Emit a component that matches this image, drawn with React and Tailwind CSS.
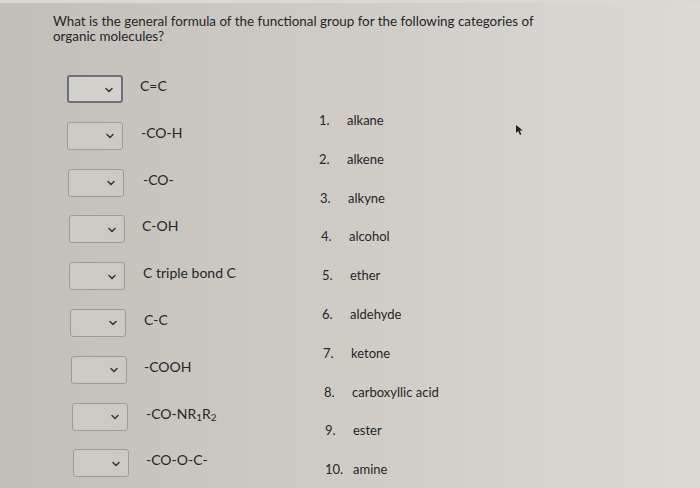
import React from 'react';

const formulas = [
  { label: 'C=C', box: 'ml-[67px]', text: 'ml-[17px]', focused: true },
  { label: '-CO-H', box: 'ml-[67px]', text: 'ml-[18px]' },
  { label: '-CO-', box: 'ml-[68px]', text: 'ml-[19px]' },
  { label: 'C-OH', box: 'ml-[69px]', text: 'ml-[17px]' },
  { label: 'C triple bond C', box: 'ml-[69px]', text: 'ml-[18px]' },
  { label: 'C-C', box: 'ml-[70px]', text: 'ml-[18px]' },
  { label: '-COOH', box: 'ml-[71px]', text: 'ml-[17px]' },
  { label: 'NR', box: 'ml-[72px]', text: 'ml-[18px]' },
  { label: '-CO-O-C-', box: 'ml-[73px]', text: 'ml-[17px]' },
];

const groups = [
  ['1.', 'alkane', 'ml-[0px]'],
  ['2.', 'alkene', 'ml-[0px]'],
  ['3.', 'alkyne', 'ml-[1px]'],
  ['4.', 'alcohol', 'ml-[2px]'],
  ['5.', 'ether', 'ml-[3px]'],
  ['6.', 'aldehyde', 'ml-[3px]'],
  ['7.', 'ketone', 'ml-[4px]'],
  ['8.', 'carboxyllic acid', 'ml-[5px]'],
  ['9.', 'ester', 'ml-[6px]'],
  ['10.', 'amine', 'ml-[6px]'],
];

function Chevron() {
  return (
    <svg width="8" height="6" viewBox="0 0 8 6" className="text-[#3a3a3a]">
      <path d="M1 1.5 L4 4.5 L7 1.5" fill="none" stroke="currentColor" strokeWidth="1.6" strokeLinecap="round" strokeLinejoin="round" />
    </svg>
  );
}

function Label({ label }) {
  if (label === 'NR') {
    return (
      <span>
        -CO-NR<sub className="text-[10px]">1</sub>R<sub className="text-[10px]">2</sub>
      </span>
    );
  }
  return <span>{label}</span>;
}

function Cursor() {
  return (
    <svg width="10" height="12" viewBox="0 0 10 12" className="absolute left-[515px] top-[124px]">
      <path d="M1 1 L1 9 L3.2 7 L5 11 L6.4 10.3 L4.7 6.5 L7.8 6.5 Z" fill="#1f1f1f" />
    </svg>
  );
}

export default function App() {
  return (
    <div
      className="relative w-[700px] h-[488px] overflow-hidden bg-gradient-to-r from-[#c2bfb9] via-[#cfccc6] to-[#dcdad5] text-[#262626]"
      style={{ fontFamily: 'Lato, "Open Sans", sans-serif' }}
    >
      <div className="h-[3px] bg-[#dad8d3]" />
      <p className="ml-[53px] mt-[11px] w-[520px] text-[13.4px] leading-[15px]">
        What is the general formula of the functional group for the following categories of organic molecules?
      </p>

      <div className="flex mt-[31px]">
        <div className="flex flex-col gap-[18.8px] w-[300px]">
          {formulas.map((f, i) => (
            <div key={i} className={`flex items-center ${f.box}`}>
              <div
                className={`w-[56px] h-[28px] rounded-[3px] flex items-center justify-end pr-[8px] pt-[1px] ${
                  f.focused ? 'border-2 border-[#6e6f7c] bg-[#d3d1cc]' : 'border border-[#9d9b96] bg-[#cdcac4]'
                }`}
              >
                <Chevron />
              </div>
              <div className={`${f.text} text-[14px] -mt-[7px]`}>
                <Label label={f.label} />
              </div>
            </div>
          ))}
        </div>

        <div className="flex flex-col mt-[38px] ml-[19px] gap-[23.8px]">
          {groups.map(([n, name, shift], i) => (
            <div key={i} className={`flex items-center text-[13px] leading-[15px] ${shift}`}>
              <span className="w-[28px]">{n}</span>
              <span>{name}</span>
            </div>
          ))}
        </div>
      </div>
      <Cursor />
    </div>
  );
}
